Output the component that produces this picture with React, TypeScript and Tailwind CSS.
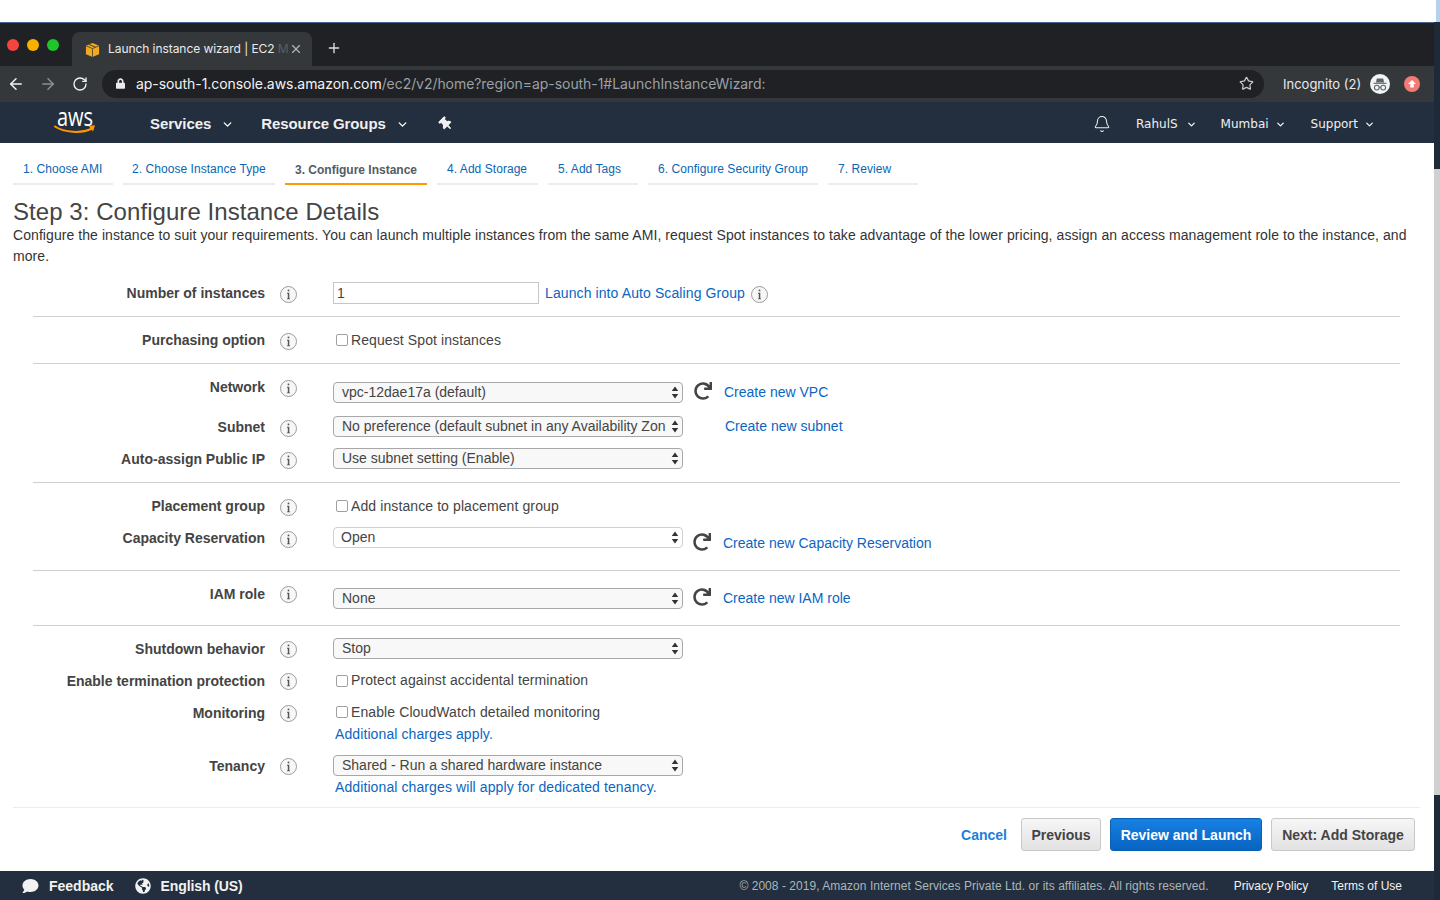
import type { ReactNode } from "react";
import { ArrowLeft, ArrowRight, Bell, ChevronDown, Plus, RotateCw, Star, X } from "lucide-react";
import { FaComment, FaGlobeAmericas, FaLock, FaRedo, FaThumbtack } from "react-icons/fa";

const steps = [
  { label: "1. Choose AMI", width: "w-[100px] pl-[10px]" },
  { label: "2. Choose Instance Type", width: "w-[152px] pl-[9px]" },
  { label: "3. Configure Instance", width: "w-[142px] pl-[10px]", active: true },
  { label: "4. Add Storage", width: "w-[101px] pl-[10px]" },
  { label: "5. Add Tags", width: "w-[90px] pl-[10px]" },
  { label: "6. Configure Security Group", width: "w-[170px] pl-[10px]" },
  { label: "7. Review", width: "w-[90px] pl-[10px]" },
];

function InfoIcon({ className = "" }: { className?: string }) {
  return (
    <svg viewBox="0 0 17 17" className={`h-[17px] w-[17px] shrink-0 ${className}`}>
      <circle cx="8.5" cy="8.5" r="8" fill="#f7f7f7" stroke="#9a9a9a" />
      <rect x="7.7" y="3.6" width="1.6" height="1.7" fill="#555" />
      <path d="M7 6.8h2.3v5.6h.8v.9H6.9v-.9h.9V7.7H7z" fill="#555" />
    </svg>
  );
}

function SelectArrows() {
  return (
    <svg viewBox="0 0 8 14" className="h-[13px] w-[8px] shrink-0">
      <path d="M4 0.5L7.5 5.5H0.5z M4 13.5L0.5 8.5H7.5z" fill="#333" />
    </svg>
  );
}

function Select({ value, plain, className = "" }: { value: string; plain?: boolean; className?: string }) {
  return (
    <div
      className={`flex h-[21px] w-[350px] shrink-0 items-center gap-[3px] rounded-[4px] border pr-[3px] text-[14px] text-[#444] ${
        plain ? "border-[#d0d0d0] bg-white pl-[7px]" : "border-[#a8a8a8] bg-[#f8f8f8] pl-[8px]"
      } ${className}`}
    >
      <span className="min-w-0 flex-1 whitespace-nowrap">{value}</span>
      <SelectArrows />
    </div>
  );
}

function Check({ label }: { label: string }) {
  return (
    <label className="ml-[3px] flex items-center text-[14px] tracking-[0.1px] text-[#444]">
      <input type="checkbox" className="h-[12px] w-[12px] appearance-none rounded-[2px] border border-[#a0a0a0] bg-white" />
      <span className="ml-[3px]">{label}</span>
    </label>
  );
}

function Link({ children, className = "" }: { children: ReactNode; className?: string }) {
  return <a className={`whitespace-nowrap text-[14px] text-[#0a66c2] ${className}`}>{children}</a>;
}

function Refresh({ className = "" }: { className?: string }) {
  return <FaRedo className={`h-[18px] w-[18px] shrink-0 text-[#444] ${className}`} />;
}

function Row({
  label,
  className = "",
  labelClass = "",
  infoClass = "",
  children,
}: {
  label: string;
  className?: string;
  labelClass?: string;
  infoClass?: string;
  children: ReactNode;
}) {
  return (
    <div className={`flex items-center ${className}`}>
      <div className={`w-[252px] shrink-0 text-right text-[14px] font-bold text-[#444] ${labelClass}`}>{label}</div>
      <InfoIcon className={`ml-[15px] ${infoClass}`} />
      <div className="ml-[36px] flex min-w-0 flex-1 items-center">{children}</div>
    </div>
  );
}

function Divider({ className = "" }: { className?: string }) {
  return <div className={`ml-[20px] h-px w-[1367px] bg-[#cfcfcf] ${className}`} />;
}

function ActionButton({ children, className = "", primary }: { children: ReactNode; className?: string; primary?: boolean }) {
  return (
    <button
      className={`h-[33px] rounded-[3px] border pt-px text-[14px] font-bold ${className} ${
        primary
          ? "border-[#0b5fb5] bg-gradient-to-b from-[#1781e4] to-[#0863c0] text-white"
          : "border-[#c8c8c8] bg-gradient-to-b from-[#f6f6f6] to-[#e2e2e2] text-[#444]"
      }`}
    >
      {children}
    </button>
  );
}

function BrowserChrome() {
  return (
    <div className="font-['Inter',sans-serif]">
      <div className="flex h-[43px] items-end bg-[#202124]">
        <div className="mb-[15px] ml-[7px] flex gap-[8px]">
          <span className="h-[12px] w-[12px] rounded-full bg-[#f5443e]" />
          <span className="h-[12px] w-[12px] rounded-full bg-[#fbb000]" />
          <span className="h-[12px] w-[12px] rounded-full bg-[#1fc52b]" />
        </div>
        <div className="ml-[13px] flex h-[34px] w-[240px] items-center rounded-t-[8px] bg-[#35383b] pl-[13px]">
          <svg viewBox="0 0 16 16" className="h-[15px] w-[15px] shrink-0">
            <path d="M1 4l7-3 7 3v9l-7 3-7-3z" fill="#f4a81d" />
            <path d="M1 4l7 3 7-3M8 7v9" stroke="#35383b" strokeWidth="0.8" fill="none" />
            <path d="M4.2 2.6l7 3" stroke="#35383b" strokeWidth="1" fill="none" />
          </svg>
          <span className="ml-[8px] w-[175px] whitespace-nowrap text-[12px] tracking-[-0.06px] text-[#e8eaed]">
            Launch instance wizard | EC2 <span className="opacity-20">M</span>
          </span>
          <X className="ml-[6px] h-[14px] w-[14px] text-[#aeb1b5]" />
        </div>
        <Plus className="mb-[10px] ml-[14px] h-[16px] w-[16px] text-[#dfe1e5]" />
      </div>
      <div className="flex h-[36px] items-center bg-[#35383b]">
        <ArrowLeft className="ml-[7px] h-[18px] w-[18px] text-[#f1f3f4]" />
        <ArrowRight className="ml-[14px] h-[18px] w-[18px] text-[#8b8e92]" />
        <RotateCw className="ml-[15px] h-[16px] w-[16px] text-[#f1f3f4]" />
        <div className="ml-[14px] mb-px flex h-[28px] w-[1162px] items-center rounded-full bg-[#202124] pl-[14px] pr-[10px]">
          <FaLock className="h-[11px] w-[9px] text-[#e8eaed]" />
          <span className="ml-[11px] flex-1 whitespace-nowrap text-[14px] tracking-[-0.06px] text-[#9aa0a6]">
            <span className="text-[#f1f3f4]">ap-south-1.console.aws.amazon.com</span>
            /ec2/v2/home?region=ap-south-1#LaunchInstanceWizard:
          </span>
          <Star className="h-[15px] w-[15px] text-[#c5c8cc]" />
        </div>
        <span className="ml-[19px] mt-[2px] whitespace-nowrap text-[13px] text-[#e8eaed]">Incognito (2)</span>
        <span className="ml-[9px] flex h-[20px] w-[20px] items-center justify-center rounded-full bg-[#f1f3f4]">
          <svg viewBox="0 0 20 20" className="h-[20px] w-[20px]">
            <path d="M6.8 4.5h6.4l.9 4H6z" fill="#5f6368" />
            <path d="M3.5 9.3h13" stroke="#5f6368" strokeWidth="1.1" />
            <circle cx="6.8" cy="13.6" r="2.4" fill="none" stroke="#5f6368" strokeWidth="1.1" />
            <circle cx="13.2" cy="13.6" r="2.4" fill="none" stroke="#5f6368" strokeWidth="1.1" />
            <path d="M9.2 13.2h1.6" stroke="#5f6368" strokeWidth="1" />
          </svg>
        </span>
        <span className="ml-[14px] flex h-[16px] w-[16px] items-center justify-center rounded-full bg-[#f47b74]">
          <svg viewBox="0 0 10 10" className="h-[10px] w-[10px]">
            <path d="M5 1l4 4H6.8v3.5H3.2V5H1z" fill="#fff" />
          </svg>
        </span>
      </div>
    </div>
  );
}

function AwsNav() {
  return (
    <div className="flex h-[41px] items-center bg-[#232f3e] pt-[3px] text-white">
      <div className="ml-[54px] mt-[5px] flex w-[42px] flex-col items-center self-start">
        <span className="scale-y-[1.3] font-['Open_Sans',sans-serif] text-[20px] leading-[14px]">aws</span>
        <svg viewBox="0 0 42 11" className="h-[11px] w-[42px]">
          <path d="M1 2.5C10 8.5 27 10 38 4.5" fill="none" stroke="#ff9900" strokeWidth="2" strokeLinecap="round" />
          <path d="M34.5 1.8L41 1.2 39 7.5z" fill="#ff9900" />
        </svg>
      </div>
      <span className="ml-[54px] font-['Liberation_Sans',sans-serif] text-[15px] font-bold tracking-[-0.05px] text-[#f0f0f0]">
        Services
      </span>
      <ChevronDown className="ml-[10px] h-[13px] w-[13px]" strokeWidth={2.5} />
      <span className="ml-[27px] font-['Liberation_Sans',sans-serif] text-[15px] font-bold tracking-[-0.1px] text-[#f0f0f0]">
        Resource Groups
      </span>
      <ChevronDown className="ml-[10px] h-[13px] w-[13px]" strokeWidth={2.5} />
      <FaThumbtack className="ml-[30px] h-[14px] w-[14px] -rotate-45 text-[#f0f0f0]" />
      <div className="ml-auto flex items-center pr-[59px] font-['DejaVu_Sans',sans-serif] text-[12px] text-[#f0f0f0]">
        <Bell className="mr-[25px] h-[18px] w-[18px]" strokeWidth={1.4} />
        <span>RahulS</span>
        <ChevronDown className="ml-[8px] h-[11px] w-[11px]" strokeWidth={3} />
        <span className="ml-[24px]">Mumbai</span>
        <ChevronDown className="ml-[6px] h-[11px] w-[11px]" strokeWidth={3} />
        <span className="ml-[25px]">Support</span>
        <ChevronDown className="ml-[6px] h-[11px] w-[11px]" strokeWidth={3} />
      </div>
    </div>
  );
}

function Wizard() {
  return (
    <div className="flex-1 bg-white px-[13px] font-['Liberation_Sans',sans-serif]">
      <div className="mt-[15px] flex gap-[10px]">
        {steps.map((step) => (
          <div
            key={step.label}
            className={`h-[27px] border-b-2 text-[12px] leading-[22px] whitespace-nowrap ${step.width} ${
              step.active ? "border-[#ff9900] pt-px font-bold text-[#545b64]" : "border-[#eaeded] tracking-[0.05px] text-[#0a66b2]"
            }`}
          >
            {step.label}
          </div>
        ))}
      </div>

      <h1 className="mt-[13px] text-[24px] leading-[27px] tracking-[0.06px] text-[#444]">Step 3: Configure Instance Details</h1>
      <p className="w-[1407px] text-[14px] leading-[21px] tracking-[0.07px] text-[#333]">
        Configure the instance to suit your requirements. You can launch multiple instances from the same AMI, request
        Spot instances to take advantage of the lower pricing, assign an access management role to the instance, and more.
      </p>

      <Row label="Number of instances" className="mt-[10px] h-[32px]" infoClass="mt-[2px]">
        <input
          readOnly
          value="1"
          className="h-[22px] w-[206px] border border-[#c6c6c6] px-[3px] text-[14px] text-[#444]"
        />
        <Link className="ml-[6px] tracking-[0.1px]">Launch into Auto Scaling Group</Link>
        <InfoIcon className="ml-[6px] mt-[2px]" />
      </Row>
      <Divider className="mt-[7px]" />
      <Row label="Purchasing option" className="mt-[7px] h-[32px]" infoClass="mt-[2px]">
        <Check label="Request Spot instances" />
      </Row>
      <Divider className="mt-[7px]" />

      <Row label="Network" className="mt-[12px] h-[32px]" labelClass="mb-[10px]" infoClass="mb-[8px]">
        <Select value="vpc-12dae17a (default)" />
        <Refresh className="mb-[3px] ml-[11px]" />
        <Link className="ml-[12px]">Create new VPC</Link>
      </Row>
      <Row label="Subnet" className="mt-[2px] h-[32px]" labelClass="mt-[2px]" infoClass="mt-[4px]">
        <Select value="No preference (default subnet in any Availability Zon" />
        <Link className="ml-[42px]">Create new subnet</Link>
      </Row>
      <Row label="Auto-assign Public IP" className="h-[32px]" labelClass="mt-[2px]" infoClass="mt-[4px]">
        <Select value="Use subnet setting (Enable)" />
      </Row>
      <Divider className="mt-[8px]" />

      <Row label="Placement group" className="mt-[7px] h-[32px]" infoClass="mt-[2px]">
        <Check label="Add instance to placement group" />
      </Row>
      <Row label="Capacity Reservation" className="h-[32px]" infoClass="mt-[2px]">
        <Select value="Open" plain className="mb-[2px]" />
        <Refresh className="mt-[7px] ml-[10px]" />
        <Link className="ml-[12px] mt-[10px]">Create new Capacity Reservation</Link>
      </Row>
      <Divider className="mt-[16px]" />

      <Row label="IAM role" className="mt-[11px] h-[32px]" labelClass="mb-[8px]" infoClass="mb-[8px]">
        <Select value="None" />
        <Refresh className="mb-[3px] ml-[10px]" />
        <Link className="ml-[12px]">Create new IAM role</Link>
      </Row>
      <Divider className="mt-[11px]" />

      <Row label="Shutdown behavior" className="mt-[7px] h-[32px]">
        <Select value="Stop" className="mb-[2px]" />
      </Row>
      <Row label="Enable termination protection" className="h-[31px]" labelClass="mt-[1px]" infoClass="mt-[1px]">
        <Check label="Protect against accidental termination" />
      </Row>
      <Row label="Monitoring" className="mt-[2px] h-[28px]" labelClass="mt-[2px]" infoClass="mt-[2px]">
        <Check label="Enable CloudWatch detailed monitoring" />
      </Row>
      <div className="h-[16px] pl-[322px] leading-[16px]">
        <Link className="tracking-[0.1px]">Additional charges apply.</Link>
      </div>
      <Row label="Tenancy" className="mt-[10px] h-[26px]" labelClass="mt-[2px]" infoClass="mt-[2px]">
        <Select value="Shared - Run a shared hardware instance" />
      </Row>
      <div className="mt-px h-[16px] pl-[322px] leading-[16px]">
        <Link className="tracking-[0.1px]">Additional charges will apply for dedicated tenancy.</Link>
      </div>

      <div className="mt-[12px] h-px w-[1407px] bg-[#eaeded]" />
      <div className="mt-[10px] flex w-[1402px] items-center justify-end gap-[9px]">
        <a className="mr-[5px] pt-px text-[14px] font-bold text-[#1a7fe0]">Cancel</a>
        <ActionButton className="w-[80px]">Previous</ActionButton>
        <ActionButton className="w-[152px]" primary>
          Review and Launch
        </ActionButton>
        <ActionButton className="w-[144px]">Next: Add Storage</ActionButton>
      </div>
    </div>
  );
}

function Footer() {
  return (
    <div className="flex h-[29px] items-center bg-[#232f3e] font-['Liberation_Sans',sans-serif]">
      <FaComment className="ml-[22px] h-[16px] w-[17px] text-[#f2f2f2]" />
      <span className="ml-[10px] pt-px text-[14px] font-bold text-[#f2f2f2]">Feedback</span>
      <FaGlobeAmericas className="ml-[21px] h-[16px] w-[16px] text-[#f2f2f2]" />
      <span className="ml-[10px] pt-px text-[14px] font-bold tracking-[-0.1px] text-[#f2f2f2]">English (US)</span>
      <div className="ml-auto flex items-center pr-[32px] text-[12px]">
        <span className="tracking-[0.04px] text-[#aab7b8]">
          © 2008 - 2019, Amazon Internet Services Private Ltd. or its affiliates. All rights reserved.
        </span>
        <span className="ml-[25px] text-[#f2f2f2]">Privacy Policy</span>
        <span className="ml-[23px] text-[#f2f2f2]">Terms of Use</span>
      </div>
    </div>
  );
}

export default function App() {
  return (
    <div className="flex h-[900px] w-[1440px] flex-col overflow-hidden bg-white">
      <div className="flex h-[22px] shrink-0 justify-end">
        <div className="w-[4px] bg-[#b4d2f0]" />
      </div>
      <div className="flex flex-1">
        <div className="flex w-[1434px] flex-col border-t border-[#4b688c]">
          <BrowserChrome />
          <AwsNav />
          <Wizard />
          <Footer />
        </div>
        <div className="flex w-[6px] flex-col">
          <div className="h-[147px] bg-[#1f2a38]" />
          <div className="flex-1 bg-[#d0d0d0]" />
          <div className="h-[105px] bg-[#1f2a38]" />
        </div>
      </div>
    </div>
  );
}
